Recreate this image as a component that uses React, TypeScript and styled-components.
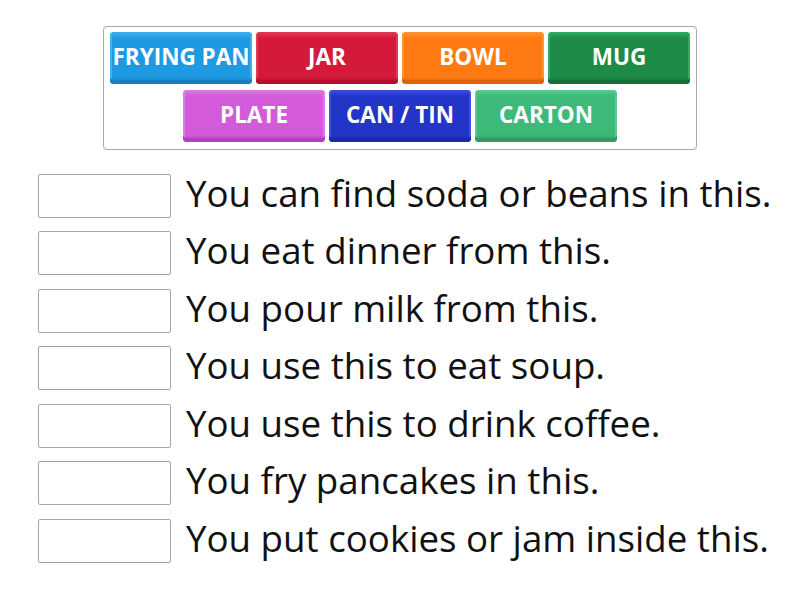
import React from 'react';
import styled, { createGlobalStyle } from 'styled-components';

type Tile = { label: string; color: string; light: string; dark: string };

const tilesTop: Tile[] = [
  { label: 'FRYING PAN', color: '#1e9ae3', light: '#3fb0f0', dark: '#157fc0' },
  { label: 'JAR', color: '#d5193a', light: '#e23a55', dark: '#b3102c' },
  { label: 'BOWL', color: '#ff7a12', light: '#ff9433', dark: '#e0620a' },
  { label: 'MUG', color: '#1d8b47', light: '#2fae5e', dark: '#15703a' },
];

const tilesBottom: Tile[] = [
  { label: 'PLATE', color: '#d35bd9', light: '#df7be4', dark: '#b93cc6' },
  { label: 'CAN / TIN', color: '#2334c8', light: '#3d50e0', dark: '#1a27a8' },
  { label: 'CARTON', color: '#3db979', light: '#5cca8e', dark: '#2e9c63' },
];

const questions = [
  'You can find soda or beans in this.',
  'You eat dinner from this.',
  'You pour milk from this.',
  'You use this to eat soup.',
  'You use this to drink coffee.',
  'You fry pancakes in this.',
  'You put cookies or jam inside this.',
];

const GlobalStyle = createGlobalStyle`
  body {
    margin: 0;
    background: #fff;
    font-family: "Open Sans", "Noto Sans", sans-serif;
  }
`;

const Page = styled.div`
  width: 800px;
  height: 600px;
  padding-top: 26px;
  box-sizing: border-box;
`;

const Bank = styled.div`
  width: 594px;
  margin: 0 auto;
  border: 1px solid #a9a9a9;
  border-radius: 4px;
  box-sizing: border-box;
  padding: 5px 0 7px;
  display: flex;
  flex-direction: column;
  align-items: center;
  gap: 6px;
`;

const TileRow = styled.div`
  display: flex;
  gap: 4px;
`;

const TileBox = styled.div<{ $c: string; $l: string; $d: string }>`
  width: 142px;
  height: 52px;
  box-sizing: border-box;
  border-radius: 4px;
  background: linear-gradient(${(p) => p.$l} 0%, ${(p) => p.$c} 12%, ${(p) => p.$c} 85%, ${(p) => p.$d} 100%);
  box-shadow: inset 0 -4px 0 ${(p) => p.$d}, inset 2px 0 0 ${(p) => p.$l}, inset -2px 0 0 ${(p) => p.$l};
  color: #fff;
  font-weight: 700;
  font-size: 22.5px;
  display: flex;
  align-items: center;
  justify-content: center;
  padding-bottom: 4px;
  white-space: nowrap;
`;

const List = styled.div`
  margin-top: 24px;
  padding-left: 38px;
  display: flex;
  flex-direction: column;
  gap: 14px;
`;

const Row = styled.div`
  display: flex;
  align-items: center;
  height: 43.5px;
`;

const Blank = styled.div`
  width: 133px;
  height: 44px;
  box-sizing: border-box;
  border: 1px solid #a6a6a6;
  border-radius: 2px;
  background: #fff;
  flex-shrink: 0;
`;

const Clue = styled.div`
  margin-left: 15px;
  font-size: 36.7px;
  color: #111;
  white-space: nowrap;
  line-height: 1;
  padding-bottom: 5px;
`;

export default function App() {
  const renderTile = (t: Tile) => (
    <TileBox key={t.label} $c={t.color} $l={t.light} $d={t.dark}>
      {t.label}
    </TileBox>
  );

  return (
    <>
      <GlobalStyle />
      <Page>
        <Bank>
          <TileRow>{tilesTop.map(renderTile)}</TileRow>
          <TileRow>{tilesBottom.map(renderTile)}</TileRow>
        </Bank>
        <List>
          {questions.map((q) => (
            <Row key={q}>
              <Blank />
              <Clue>{q}</Clue>
            </Row>
          ))}
        </List>
      </Page>
    </>
  );
}
